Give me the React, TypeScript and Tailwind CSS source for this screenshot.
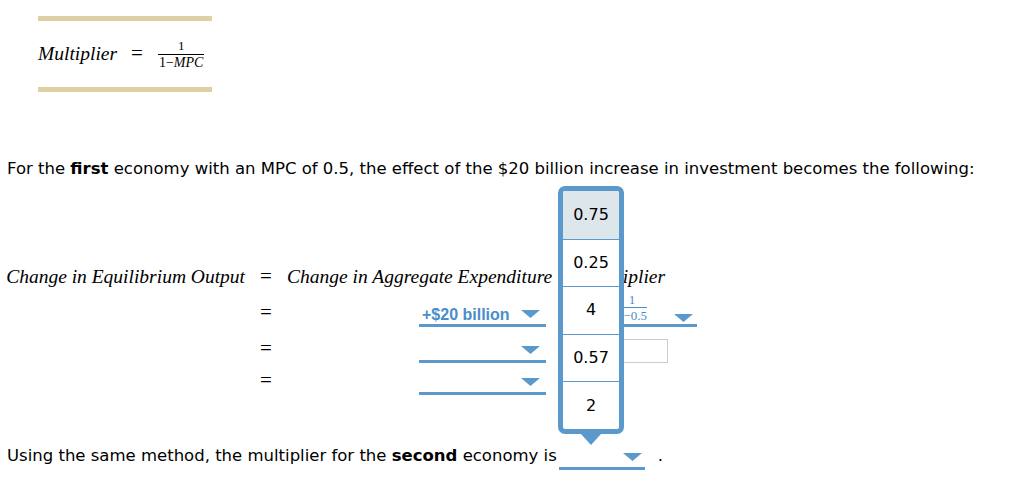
import type { ReactNode } from 'react';

const serif = { fontFamily: '"Liberation Serif", "Times New Roman", serif' };
const sans = { fontFamily: '"DejaVu Sans", Verdana, sans-serif' };

function Caret() {
    return (
        <svg width="19" height="8" viewBox="0 0 19 8" className="shrink-0">
            <path d="M0 0H19L9.5 8Z" fill="#5b98cc" />
        </svg>
    );
}

// underlined answer box with the blue caret on the right
function Drop({ className, children }: { className: string; children?: ReactNode }) {
    return (
        <div className={`flex items-center justify-between border-b-[3px] border-[#5b98cc] ${className}`}>
            <div>{children}</div>
            <Caret />
        </div>
    );
}

const options = ['0.75', '0.25', '4', '0.57', '2'];

export default function App() {
    return (
        <div className="relative w-[1024px] h-[483px] overflow-hidden bg-white text-black pt-[16px]">
            {/* formula box */}
            <div className="ml-[38px] w-[174px]">
                <div className="h-[5px] bg-[#ddd0a5]" />
                <div className="h-[66px] flex items-center italic text-[19.5px] whitespace-nowrap" style={serif}>
                    <span>Multiplier</span>
                    <span className="not-italic text-[21px] ml-[14px] mr-[15px]">=</span>
                    <span className="inline-flex flex-col items-center leading-none text-[14px]">
                        <span className="not-italic pb-[2px] text-[13px]">1</span>
                        <span className="border-t border-black px-[1px] pt-[1px]">
                            <span className="not-italic">1−</span>MPC
                        </span>
                    </span>
                </div>
                <div className="h-[5px] bg-[#ddd0a5]" />
            </div>

            <p className="mt-[67px] pl-[7px] text-[16.5px] leading-[20px] whitespace-nowrap" style={sans}>
                For the <b>first</b> economy with an MPC of 0.5, the effect of the $20 billion increase in investment becomes the following:
            </p>

            {/* equation rows */}
            <div className="mt-[83px] pl-[7px] text-[19.5px] whitespace-nowrap" style={serif}>
                <div className="flex items-center h-[30px] italic">
                    <div className="w-[238px] flex justify-end">Change in Equilibrium Output</div>
                    <div className="w-[42px] text-center not-italic text-[21px]">=</div>
                    <div className="w-[265px]">Change in Aggregate Expenditure</div>
                    <div className="w-[34px] text-center not-italic">×</div>
                    <div>Multiplier</div>
                </div>
                <div className="flex items-center h-[42px]">
                    <div className="w-[238px]" />
                    <div className="w-[42px] text-center text-[21px]">=</div>
                    <div className="w-[265px] flex justify-end pr-[6px]">
                        <Drop className="w-[127px] h-[24px] mt-[4px] pl-[3px] pr-[6px]">
                            <span className="font-bold text-[16px] text-[#4a8dcb]" style={{ fontFamily: '"Liberation Sans", Arial, sans-serif' }}>
                                +$20 billion
                            </span>
                        </Drop>
                    </div>
                    <div className="w-[38px]" />
                    <div className="w-[107px] h-[33px] mb-[5px] flex items-end justify-between border-b-[3px] border-[#5b98cc] pl-[27px] pr-[4px] pb-[2px]">
                        <span className="inline-flex flex-col items-center leading-none text-[13px] text-[#4a8dcb]">
                            <span className="pb-[1px]">1</span>
                            <span className="border-t border-[#4a8dcb] pt-[1px]">1−0.5</span>
                        </span>
                        <Caret />
                    </div>
                </div>
                <div className="flex items-center h-[30px]">
                    <div className="w-[238px]" />
                    <div className="w-[42px] text-center text-[21px]">=</div>
                    <div className="w-[265px] flex justify-end pr-[6px]">
                        <Drop className="w-[127px] h-[24px] mt-[4px] pr-[6px]" />
                    </div>
                    <div className="w-[38px]" />
                    <div className="w-[78px] h-[24px] mt-[3px] border border-[#cccccc]" />
                </div>
                <div className="flex items-center h-[34px]">
                    <div className="w-[238px]" />
                    <div className="w-[42px] text-center text-[21px]">=</div>
                    <div className="w-[265px] flex justify-end pr-[6px]">
                        <Drop className="w-[127px] h-[24px] mt-[4px] pr-[6px]" />
                    </div>
                </div>
            </div>

            <div className="mt-[44px] pl-[7px] flex items-center text-[16.5px] leading-[20px] whitespace-nowrap" style={sans}>
                <span>
                    Using the same method, the multiplier for the <b>second</b> economy is
                </span>
                <Drop className="ml-[2px] w-[86px] h-[24px] mt-[4px] pr-[3px]" />
                <span className="ml-[13px]">.</span>
            </div>

            {/* open dropdown list */}
            <div className="absolute left-[558px] top-[186px] z-10 w-[66px]">
                <div className="border-[5px] border-[#5b98cc] rounded-[7px] bg-white overflow-hidden text-[16px]" style={sans}>
                    {options.map((o, i) => (
                        <div
                            key={o}
                            className={`h-[47.6px] flex items-center justify-center ${i === 0 ? 'bg-[#dde6ea]' : 'border-t border-[#5b98cc]'}`}
                        >
                            {o}
                        </div>
                    ))}
                </div>
                <svg width="20" height="11" viewBox="0 0 20 11" className="mx-auto block">
                    <path d="M0 0H20L10 11Z" fill="#5b98cc" />
                </svg>
            </div>
        </div>
    );
}
